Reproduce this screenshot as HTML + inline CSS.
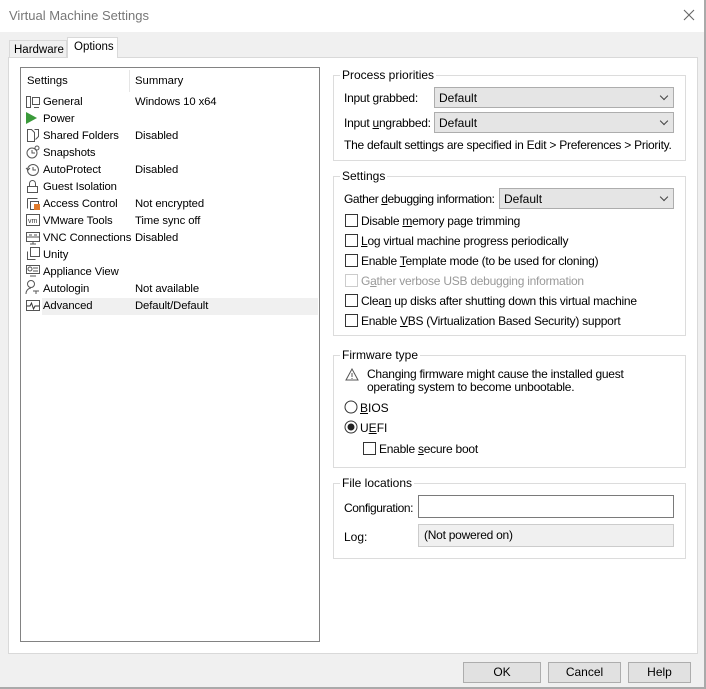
<!DOCTYPE html>
<html><head><style>
*{box-sizing:border-box;margin:0;padding:0}
body{width:706px;height:689px;background:#f0f0f0;font-family:"Liberation Sans",sans-serif;font-size:12px;color:#000;position:relative;overflow:hidden}
.a{position:absolute;white-space:nowrap}
.title{left:0;top:0;width:706px;height:32px;background:#fff;border-right:1px solid #aaa}
.grp{position:absolute;border:1px solid #dcdcdc}
.lg{position:absolute;top:-8px;left:6px;background:#fff;padding:0 2px;line-height:14px}
.combo{position:absolute;background:#e5e5e5;border:1px solid #adadad;height:21px;line-height:20px;padding-left:4px}
.combo:after{content:"";position:absolute;right:6px;top:5px;width:5px;height:5px;border-right:1px solid #444;border-bottom:1px solid #444;transform:rotate(45deg)}
.cb{position:absolute;width:13px;height:13px;border:1px solid #333;background:#fff}
.btn{position:absolute;top:662px;height:21px;background:#e1e1e1;border:1px solid #adadad;text-align:center;line-height:19px}
.li{position:absolute;left:43px;height:17px;line-height:17px;font-size:11.3px;letter-spacing:-0.1px}
.ls{position:absolute;left:135px;height:17px;line-height:17px;font-size:11.3px;letter-spacing:-0.1px}
.n{letter-spacing:-0.25px}
</style></head><body>
<div class="a title"></div>
<div class="a" style="left:9px;top:8px;font-size:13px;color:#777">Virtual Machine Settings</div>
<svg class="a" style="left:683px;top:9px" width="12" height="12"><path d="M1 1L11 11M11 1L1 11" stroke="#666" stroke-width="1.1"/></svg>
<div class="a" style="left:704px;top:0;width:2px;height:689px;background:#aaa"></div>
<div class="a" style="left:0;top:687px;width:706px;height:2px;background:#aaa"></div>
<!-- tabs -->
<div class="a" style="left:8px;top:57px;width:690px;height:597px;background:#fff;border:1px solid #d9d9d9"></div>
<div class="a" style="left:9px;top:40px;width:58px;height:18px;border:1px solid #d9d9d9;border-bottom:none;padding:3px 0 0 4px;font-size:11.5px">Hardware</div>
<div class="a" style="left:67px;top:37px;width:51px;height:21px;border:1px solid #d9d9d9;border-bottom:none;background:#fff;padding:3px 0 0 6px;font-size:11.5px">Options</div>
<!-- list -->
<div class="a" style="left:20px;top:67px;width:300px;height:575px;border:1px solid #828282;background:#fff"></div>
<div class="a" style="left:129px;top:70px;width:1px;height:22px;background:#e5e5e5"></div>
<div class="a" style="left:27px;top:75px;font-size:11.3px">Settings</div>
<div class="a" style="left:135px;top:75px;font-size:11.3px">Summary</div>
<div class="a" style="left:42px;top:298px;width:276px;height:17px;background:#f0f0f0"></div>
<div class="li" style="top:94px">General</div><div class="ls" style="top:94px">Windows 10 x64</div>
<div class="li" style="top:111px">Power</div>
<div class="li" style="top:128px">Shared Folders</div><div class="ls" style="top:128px">Disabled</div>
<div class="li" style="top:145px">Snapshots</div>
<div class="li" style="top:162px">AutoProtect</div><div class="ls" style="top:162px">Disabled</div>
<div class="li" style="top:179px">Guest Isolation</div>
<div class="li" style="top:196px">Access Control</div><div class="ls" style="top:196px">Not encrypted</div>
<div class="li" style="top:213px">VMware Tools</div><div class="ls" style="top:213px">Time sync off</div>
<div class="li" style="top:230px">VNC Connections</div><div class="ls" style="top:230px">Disabled</div>
<div class="li" style="top:247px">Unity</div>
<div class="li" style="top:264px">Appliance View</div>
<div class="li" style="top:281px">Autologin</div><div class="ls" style="top:281px">Not available</div>
<div class="li" style="top:298px">Advanced</div><div class="ls" style="top:298px">Default/Default</div>
<!-- icons -->
<svg class="a" style="left:25px;top:95px" width="16" height="220" fill="none" stroke="#555" stroke-width="1">
<rect x="1.5" y="1.5" width="4" height="11"/><rect x="7.5" y="2.5" width="7" height="7"/><path d="M9 12.5h5"/>
<path d="M1 17v12l11-6z" fill="#3a9a3a" stroke="none"/>
<path d="M2.5 34.5h4l3 3v9h-7z M9.5 34.5h4v7l-3 3"/>
<circle cx="7" cy="58" r="5"/><path d="M7 55v3h3"/><circle cx="12" cy="53" r="2"/>
<circle cx="8" cy="75" r="5.5"/><path d="M8 72v3h3 M1 73l2 2 2-2"/>
<rect x="2.5" y="91.5" width="10" height="6"/><path d="M4.5 91.5v-3a3 3 0 0 1 6 0v3"/>
<path d="M2.5 103.5h10 M2.5 103.5v10 M5.5 106.5h8v8h-8z"/><rect x="9" y="109" width="6" height="6" fill="#e07a2c" stroke="none"/>
<rect x="1.5" y="119.5" width="13" height="11"/><text x="3" y="128" font-size="7" fill="#333" stroke="none" font-family="Liberation Sans">vm</text>
<rect x="1.5" y="137.5" width="13" height="9"/><path d="M1.5 142h13 M4 140h3 M9 140h3 M5 149h6 M8 146.5v2"/>
<path d="M5.5 152.5h9v9h-9z M2.5 156.5v8h8"/>
<rect x="1.5" y="170.5" width="13" height="8"/><circle cx="5" cy="174" r="2"/><path d="M8 173h5 M8 176h5 M5 181h6"/>
<circle cx="6" cy="189" r="3.5"/><path d="M1 199c0-4 3-6 5-6 M8 196h6 M11 196v3"/>
<rect x="1.5" y="205.5" width="13" height="10"/><path d="M2 211h3l1.5-3 2 6 1.5-3h4" stroke="#333"/>
</svg>
<!-- Process priorities -->
<div class="grp" style="left:333px;top:75px;width:353px;height:86px"><span class="lg">Process priorities</span></div>
<div class="a n" style="left:344px;top:91px">Input <u>g</u>rabbed:</div>
<div class="combo" style="left:434px;top:87px;width:240px">Default</div>
<div class="a n" style="left:344px;top:116px">Input <u>u</u>ngrabbed:</div>
<div class="combo" style="left:434px;top:112px;width:240px">Default</div>
<div class="a n" style="left:344px;top:138px">The default settings are specified in Edit &gt; Preferences &gt; Priority.</div>
<!-- Settings -->
<div class="grp" style="left:333px;top:176px;width:353px;height:160px"><span class="lg">Settings</span></div>
<div class="a" style="left:344px;top:192px;letter-spacing:-0.4px">Gather <u>d</u>ebugging information:</div>
<div class="combo" style="left:499px;top:188px;width:175px">Default</div>
<div class="cb" style="left:345px;top:214px"></div><div class="a n" style="left:361px;top:214px">Disable <u>m</u>emory page trimming</div>
<div class="cb" style="left:345px;top:234px"></div><div class="a n" style="left:361px;top:234px"><u>L</u>og virtual machine progress periodically</div>
<div class="cb" style="left:345px;top:254px"></div><div class="a n" style="left:361px;top:254px">Enable <u>T</u>emplate mode (to be used for cloning)</div>
<div class="cb" style="left:345px;top:274px;border-color:#ccc"></div><div class="a n" style="left:361px;top:274px;color:#999">G<u>a</u>ther verbose USB debugging information</div>
<div class="cb" style="left:345px;top:294px"></div><div class="a n" style="left:361px;top:294px">Clea<u>n</u> up disks after shutting down this virtual machine</div>
<div class="cb" style="left:345px;top:314px"></div><div class="a n" style="left:361px;top:314px">Enable <u>V</u>BS (Virtualization Based Security) support</div>
<!-- Firmware -->
<div class="grp" style="left:333px;top:355px;width:353px;height:113px"><span class="lg">Firmware type</span></div>
<svg class="a" style="left:345px;top:368px" width="14" height="13"><path d="M7 1L13 12H1z" fill="none" stroke="#555"/><path d="M7 5v4M7 10v1" stroke="#555"/></svg>
<div class="a n" style="left:367px;top:368px;line-height:13px">Changing firmware might cause the installed guest<br>operating system to become unbootable.</div>
<svg class="a" style="left:344px;top:400px" width="14" height="34"><circle cx="7" cy="7" r="6" fill="#fff" stroke="#333"/><circle cx="7" cy="27" r="6" fill="#fff" stroke="#333"/><circle cx="7" cy="27" r="3.5" fill="#222"/></svg>
<div class="a" style="left:360px;top:401px"><u>B</u>IOS</div>
<div class="a" style="left:360px;top:421px">U<u>E</u>FI</div>
<div class="cb" style="left:363px;top:442px"></div><div class="a n" style="left:379px;top:442px">Enable <u>s</u>ecure boot</div>
<!-- File -->
<div class="grp" style="left:333px;top:483px;width:353px;height:76px"><span class="lg">File locations</span></div>
<div class="a" style="left:344px;top:501px;letter-spacing:-0.4px">Configuration:</div>
<div class="a" style="left:418px;top:495px;width:256px;height:23px;border:1px solid #7a7a7a;background:#fff"></div>
<div class="a" style="left:344px;top:530px">Log:</div>
<div class="a n" style="left:418px;top:524px;width:256px;height:23px;border:1px solid #ccc;background:#f0f0f0;padding:3px 0 0 5px">(Not powered on)</div>
<!-- buttons -->
<div class="btn" style="left:463px;width:78px">OK</div>
<div class="btn" style="left:548px;width:73px">Cancel</div>
<div class="btn" style="left:628px;width:63px">Help</div>
</body></html>
